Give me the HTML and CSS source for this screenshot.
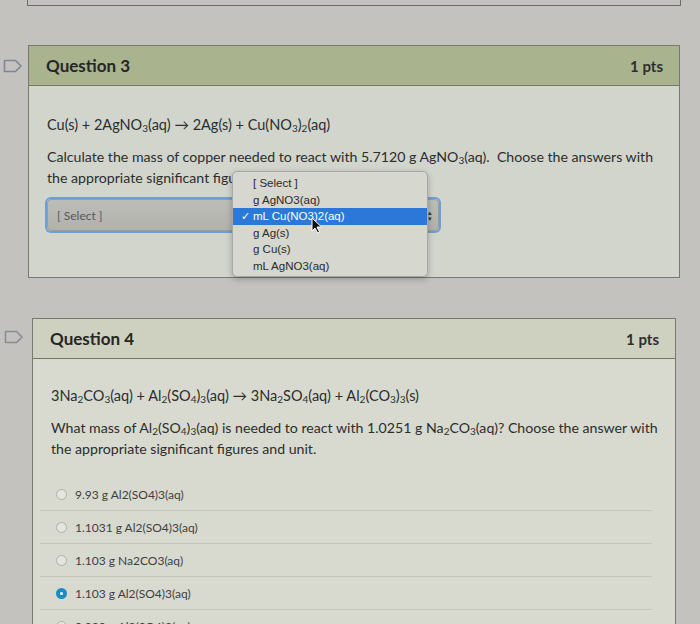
FILE: index.html
```html
<!DOCTYPE html>
<html>
<head>
<meta charset="utf-8">
<link rel="stylesheet" href="styles.css">
</head>
<body>
<div class="page">
  <div class="prev-card"></div>

  <div class="qrow q3row">
    <div class="flag"><svg width="20" height="14" viewBox="0 0 20 14"><path d="M1.5 1.5 H12.5 L18 7 L12.5 12.5 H1.5 Z" fill="none" stroke="#7d8796" stroke-width="1.6" stroke-linejoin="round"/></svg></div>
    <div class="card card3">
      <div class="card-head head3">
        <span class="qtitle">Question 3</span>
        <span class="pts">1 pts</span>
      </div>
      <div class="card-body body3">
        <p class="eq">Cu(s) + 2AgNO<sub>3</sub>(aq) → 2Ag(s) + Cu(NO<sub>3</sub>)<sub>2</sub>(aq)</p>
        <p class="text">Calculate the mass of copper needed to react with 5.7120 g AgNO<sub>3</sub>(aq).&nbsp; Choose the answers with the appropriate significant figures and unit.</p>
        <div class="select-wrap">
          <div class="select">
            <span class="sel-label">[ Select ]</span>
            <span class="sel-arrows">▴<br>▾</span>
          </div>
          <div class="popup">
            <div class="opt">[ Select ]</div>
            <div class="opt">g AgNO3(aq)</div>
            <div class="opt active"><span class="check">✓</span>mL Cu(NO3)2(aq)<svg class="cursor" width="12" height="17" viewBox="0 0 12 17"><path d="M1 1 L1 14 L4 11 L6.5 16 L8.5 15 L6 10 L10.5 10 Z" fill="#111" stroke="#fff" stroke-width="1"/></svg></div>
            <div class="opt">g Ag(s)</div>
            <div class="opt">g Cu(s)</div>
            <div class="opt">mL AgNO3(aq)</div>
          </div>
        </div>
      </div>
    </div>
  </div>

  <div class="qrow q4row">
    <div class="flag"><svg width="20" height="14" viewBox="0 0 20 14"><path d="M1.5 1.5 H12.5 L18 7 L12.5 12.5 H1.5 Z" fill="none" stroke="#858d96" stroke-width="1.6" stroke-linejoin="round"/></svg></div>
    <div class="card card4">
      <div class="card-head head4">
        <span class="qtitle">Question 4</span>
        <span class="pts">1 pts</span>
      </div>
      <div class="card-body body4">
        <p class="eq">3Na<sub>2</sub>CO<sub>3</sub>(aq) + Al<sub>2</sub>(SO<sub>4</sub>)<sub>3</sub>(aq) → 3Na<sub>2</sub>SO<sub>4</sub>(aq) + Al<sub>2</sub>(CO<sub>3</sub>)<sub>3</sub>(s)</p>
        <p class="text">What mass of Al<sub>2</sub>(SO<sub>4</sub>)<sub>3</sub>(aq) is needed to react with 1.0251 g Na<sub>2</sub>CO<sub>3</sub>(aq)? Choose the answer with the appropriate significant figures and unit.</p>
        <div class="answers">
          <div class="ans"><span class="radio"></span>9.93 g Al2(SO4)3(aq)</div>
          <div class="ans"><span class="radio"></span>1.1031 g Al2(SO4)3(aq)</div>
          <div class="ans"><span class="radio"></span>1.103 g Na2CO3(aq)</div>
          <div class="ans"><span class="radio checked"></span>1.103 g Al2(SO4)3(aq)</div>
          <div class="ans"><span class="radio"></span>0.930 g Al2(SO4)3(aq)</div>
        </div>
      </div>
    </div>
  </div>
</div>
</body>
</html>
```

FILE: styles.css
```css
html, body {
  margin: 0;
  padding: 0;
}
body {
  width: 700px;
  height: 624px;
  overflow: hidden;
  background: #c4c2be;
  font-family: Lato, "Open Sans", sans-serif;
  color: #2b2d2e;
}
.page {
  display: flex;
  flex-direction: column;
}
.prev-card {
  margin-left: 27px;
  width: 652px;
  height: 5px;
  border: 1px solid #6e6a6a;
  border-top: none;
  background: #c4c0c0;
}
.qrow {
  display: flex;
  align-items: flex-start;
}
.q3row {
  margin-top: 39px;
}
.q4row {
  margin-top: 40px;
}
.flag {
  width: 28px;
  display: flex;
  justify-content: flex-start;
  padding-left: 3px;
  box-sizing: border-box;
}
.q3row .flag { padding-top: 14px; }
.q4row .flag { width: 32px; padding-left: 4px; padding-top: 12px; }
.card {
  border: 1px solid #77786e;
  box-sizing: border-box;
}
.card3 {
  width: 652px;
  background: #d2d5cc;
}
.card4 {
  width: 644px;
  background: #d8dacf;
}
.card-head {
  display: flex;
  justify-content: space-between;
  align-items: center;
  height: 40px;
  border-bottom: 1px solid #76786a;
  box-sizing: border-box;
}
.head3 {
  background: #a9b48e;
  padding: 0 16px 0 17px;
}
.head4 {
  background: #ced0c0;
  padding: 0 16px 0 17px;
}
.qtitle {
  font-size: 17px;
  font-weight: 700;
  color: #262626;
}
.pts {
  font-size: 15px;
  font-weight: 700;
  color: #2e2e2e;
}
.card-body {
  padding: 0 18px;
}
.body3 {
  padding-top: 28px;
  padding-bottom: 46px;
}
.body4 {
  padding-top: 26px;
  padding-right: 8px;
}
p {
  margin: 0;
}
.eq {
  font-size: 14.5px;
  line-height: 22px;
}
.text {
  font-size: 14.15px;
  line-height: 21px;
  margin-top: 10px;
}
sub {
  font-size: 10px;
  vertical-align: -2px;
  line-height: 0;
}
.select-wrap {
  position: relative;
  margin-top: 11px;
}
.select {
  width: 392px;
  height: 32px;
  box-sizing: border-box;
  border: 1px solid #9b9d96;
  border-radius: 4px;
  background: linear-gradient(#bcbdb6, #b1b2ab);
  display: flex;
  align-items: center;
  justify-content: space-between;
  padding: 0 6px 0 9px;
  box-shadow: 0 0 0 2px #6d9ed4;
}
.sel-label {
  font-size: 12px;
  color: #55585a;
}
.sel-arrows {
  font-size: 7px;
  line-height: 6px;
  color: #333;
  text-align: center;
}
.popup {
  position: absolute;
  left: 185px;
  top: -28px;
  width: 196px;
  height: 106px;
  box-sizing: border-box;
  padding: 3px 0;
  border: 1px solid #a7a8a2;
  border-radius: 5px;
  background: #d6d7ce;
  box-shadow: 0 2px 6px rgba(0,0,0,0.25);
  font-family: "Liberation Sans", Arial, sans-serif;
}
.opt {
  position: relative;
  height: 16.5px;
  line-height: 16.5px;
  font-size: 11.5px;
  color: #2a2a2a;
  padding-left: 20px;
}
.opt.active {
  background: #2b78d8;
  color: #fff;
  padding-left: 8px;
}
.check {
  display: inline-block;
  width: 12px;
  font-size: 11px;
}
.cursor {
  position: absolute;
  left: 78px;
  top: 9px;
}
.answers {
  margin-top: 19px;
  margin-right: 10px;
  display: flex;
  flex-direction: column;
}
.ans {
  height: 33px;
  display: flex;
  align-items: center;
  font-size: 12px;
  color: #3d3f40;
  padding-left: 16px;
  border-bottom: 1px solid #c4c5bc;
  margin-left: -11px;
  margin-right: 5px;
  box-sizing: border-box;
}
.radio {
  width: 11px;
  height: 11px;
  border: 1px solid #aeb0ab;
  border-radius: 50%;
  background: #e4e5de;
  margin-right: 8px;
  flex: none;
  box-sizing: border-box;
}
.radio.checked {
  border: 4px solid #1b8cc6;
  background: #fff;
}
```
